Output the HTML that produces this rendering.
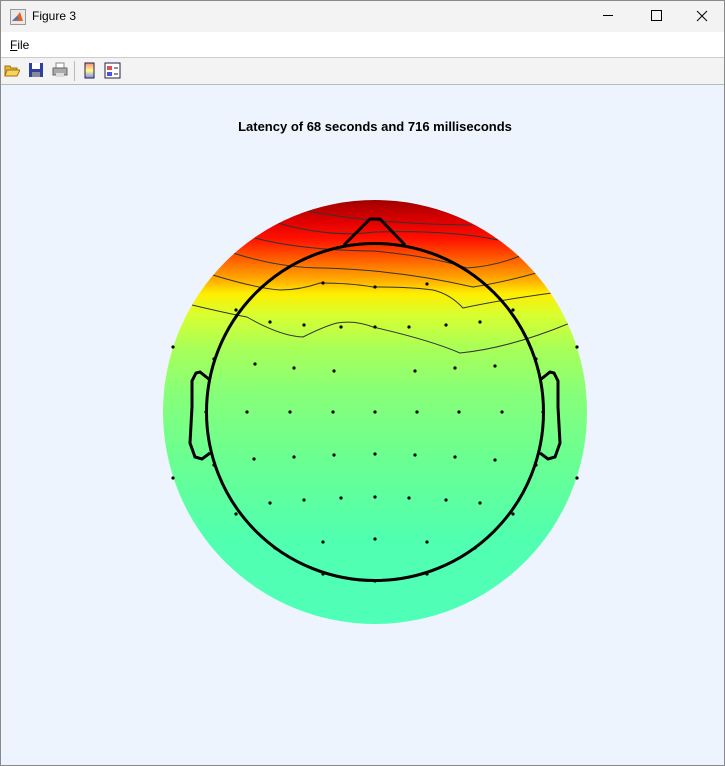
<!DOCTYPE html>
<html><head><style>
body{margin:0;width:725px;height:766px;overflow:hidden;font-family:"Liberation Sans",sans-serif;background:#fff}
.win{position:absolute;left:0;top:0;width:723px;height:764px;border:1px solid #8a8a8a;background:#f0f0f0}
.title{position:absolute;top:0;left:0;right:0;height:31px;background:#f3f3f3;font-size:12px}
.menu{position:absolute;top:31px;left:0;right:0;height:25px;background:#fff;border-bottom:1px solid #ccc;font-size:12px}
.tool{position:absolute;top:57px;left:0;right:0;height:26px;background:#f3f3f3;border-bottom:1px solid #bbb}
.fig{position:absolute;top:84px;left:0;right:0;bottom:0;background:#edf4fd}
</style></head><body><div class="win">
<div class="title">
<svg style="position:absolute;left:9px;top:8px" width="16" height="16"><rect x="0.5" y="0.5" width="15" height="15" fill="#e8e8e8" stroke="#999"/><path d="M2 12 L7 7 L10 3 L13 12 Z" fill="#e06020"/><path d="M2 12 L7 7 L9 10Z" fill="#3a78c0"/></svg>
<span style="position:absolute;left:31px;top:8px">Figure 3</span>
<span style="position:absolute;left:602px;top:14px;width:10px;border-top:1px solid #000"></span>
<span style="position:absolute;left:650px;top:9px;width:9px;height:9px;border:1px solid #000"></span>
<svg style="position:absolute;left:695px;top:9px" width="12" height="12"><path d="M1 1L11 11M11 1L1 11" stroke="#000" stroke-width="1"/></svg>
</div>
<div class="menu"><span style="position:absolute;left:9px;top:6px"><u>F</u>ile</span></div>
<div class="tool">
<svg style="position:absolute;left:3px;top:4px" width="16" height="16"><path d="M1 4h5l1 2h6v8H1z" fill="#e8b830" stroke="#a07010"/><path d="M3 8h13l-3 6H1z" fill="#f6d460" stroke="#a07010"/></svg>
<svg style="position:absolute;left:27px;top:4px" width="16" height="16"><rect x="1" y="1" width="14" height="14" fill="#3040a0"/><rect x="4" y="1" width="8" height="6" fill="#fff"/><rect x="4" y="10" width="8" height="5" fill="#889"/></svg>
<svg style="position:absolute;left:51px;top:4px" width="16" height="16"><rect x="4" y="1" width="8" height="6" fill="#fff" stroke="#888"/><rect x="1" y="6" width="14" height="7" fill="#aaa" stroke="#666"/><rect x="4" y="11" width="8" height="4" fill="#ddd"/></svg>
<span style="position:absolute;left:73px;top:3px;height:20px;border-left:1px solid #bbb"></span>
<svg style="position:absolute;left:82px;top:4px" width="14" height="18"><defs><linearGradient id="cb" x1="0" y1="0" x2="0" y2="1"><stop offset="0" stop-color="#f88"/><stop offset=".5" stop-color="#ff8"/><stop offset="1" stop-color="#88f"/></linearGradient></defs><rect x="2" y="1" width="9" height="15" fill="url(#cb)" stroke="#224"/></svg>
<svg style="position:absolute;left:103px;top:4px" width="18" height="18"><rect x="1" y="1" width="15" height="15" fill="#fff" stroke="#224"/><rect x="3" y="4" width="5" height="4" fill="#e05050"/><rect x="3" y="10" width="5" height="4" fill="#5050e0"/><path d="M10 6h4M10 12h4" stroke="#224"/></svg>
</div>
<div class="fig"></div>
</div>
<svg style="position:absolute;left:0;top:0" width="725" height="766">
<defs>
<clipPath id="c"><circle cx="375" cy="412" r="212"/></clipPath>
<linearGradient id="g" x1="0" y1="200" x2="0" y2="625" gradientUnits="userSpaceOnUse">
<stop offset="0" stop-color="#a00000"/>
<stop offset="0.05" stop-color="#e00000"/>
<stop offset="0.09" stop-color="#ff1000"/>
<stop offset="0.14" stop-color="#ff6000"/>
<stop offset="0.19" stop-color="#ffb000"/>
<stop offset="0.22" stop-color="#ffee00"/>
<stop offset="0.27" stop-color="#d8ff30"/>
<stop offset="0.35" stop-color="#a8ff58"/>
<stop offset="0.45" stop-color="#88ff78"/>
<stop offset="0.6" stop-color="#6cff90"/>
<stop offset="0.8" stop-color="#50ffb0"/>
<stop offset="1" stop-color="#50ffb8"/>
</linearGradient>
</defs>
<text x="375" y="131" text-anchor="middle" font-weight="bold" font-size="13" font-family="Liberation Sans,sans-serif">Latency of 68 seconds and 716 milliseconds</text>
<g clip-path="url(#c)">
<rect x="160" y="198" width="430" height="430" fill="url(#g)"/>
<g fill="none" stroke="#333" stroke-width="1">
<path d="M308 211 Q375 224 472 225"/>
<path d="M278 223 Q330 238 375 232 Q450 230 498 240"/>
<path d="M255 238 Q300 250 373 251 Q430 256 467 268 Q495 266 520 256"/>
<path d="M233 253 Q280 268 323 268 Q400 270 473 287 Q505 282 540 272"/>
<path d="M213 275 Q255 288 280 290 Q300 290 320 283 Q350 283 373 287 Q410 287 433 290 Q450 294 463 308 Q500 300 552 293"/>
<path d="M192 305 Q230 314 247 317 Q280 336 303 337 Q325 326 337 323 Q355 320 373 327 Q430 340 460 353 Q510 348 570 323"/>
</g>
</g>
<g fill="none" stroke="#000" stroke-width="3">
<circle cx="375" cy="412" r="168.5"/>
<path d="M344 245 L370 219 L380 219 L405 245"/>
<path d="M210 380 L200 372 L196 373 L192 381 L192 407 L190 443 L195 457 L202 459 L210 453"/>
<path d="M540 380 L550 372 L554 373 L558 381 L558 407 L560 443 L555 457 L548 459 L540 453"/>
</g>
<g fill="#000">
<circle cx="323" cy="283" r="1.6"/><circle cx="375" cy="287" r="1.6"/><circle cx="427" cy="284" r="1.6"/>
<circle cx="270" cy="322" r="1.6"/><circle cx="304" cy="325" r="1.6"/><circle cx="341" cy="327" r="1.6"/><circle cx="375" cy="327" r="1.6"/><circle cx="409" cy="327" r="1.6"/><circle cx="446" cy="325" r="1.6"/><circle cx="480" cy="322" r="1.6"/>
<circle cx="173" cy="347" r="1.6"/><circle cx="577" cy="347" r="1.6"/><circle cx="214" cy="359" r="1.6"/><circle cx="536" cy="359" r="1.6"/>
<circle cx="255" cy="364" r="1.6"/><circle cx="294" cy="368" r="1.6"/><circle cx="334" cy="371" r="1.6"/><circle cx="415" cy="371" r="1.6"/><circle cx="455" cy="368" r="1.6"/><circle cx="495" cy="366" r="1.6"/>
<circle cx="206" cy="412" r="1.6"/><circle cx="247" cy="412" r="1.6"/><circle cx="290" cy="412" r="1.6"/><circle cx="333" cy="412" r="1.6"/><circle cx="375" cy="412" r="1.6"/><circle cx="417" cy="412" r="1.6"/><circle cx="459" cy="412" r="1.6"/><circle cx="502" cy="412" r="1.6"/><circle cx="543" cy="412" r="1.6"/>
<circle cx="254" cy="459" r="1.6"/><circle cx="294" cy="457" r="1.6"/><circle cx="334" cy="455" r="1.6"/><circle cx="375" cy="454" r="1.6"/><circle cx="415" cy="455" r="1.6"/><circle cx="455" cy="457" r="1.6"/><circle cx="495" cy="460" r="1.6"/>
<circle cx="173" cy="478" r="1.6"/><circle cx="577" cy="478" r="1.6"/><circle cx="214" cy="465" r="1.6"/><circle cx="536" cy="465" r="1.6"/>
<circle cx="270" cy="503" r="1.6"/><circle cx="304" cy="500" r="1.6"/><circle cx="341" cy="498" r="1.6"/><circle cx="375" cy="497" r="1.6"/><circle cx="409" cy="498" r="1.6"/><circle cx="446" cy="500" r="1.6"/><circle cx="480" cy="503" r="1.6"/>
<circle cx="236" cy="514" r="1.6"/><circle cx="513" cy="514" r="1.6"/><circle cx="236" cy="310" r="1.6"/><circle cx="513" cy="310" r="1.6"/>
<circle cx="323" cy="542" r="1.6"/><circle cx="375" cy="539" r="1.6"/><circle cx="427" cy="542" r="1.6"/>
<circle cx="275" cy="548" r="1.6"/><circle cx="475" cy="548" r="1.6"/><circle cx="323" cy="574" r="1.6"/><circle cx="427" cy="574" r="1.6"/><circle cx="375" cy="581" r="1.6"/>
</g>
</svg>
</body></html>
